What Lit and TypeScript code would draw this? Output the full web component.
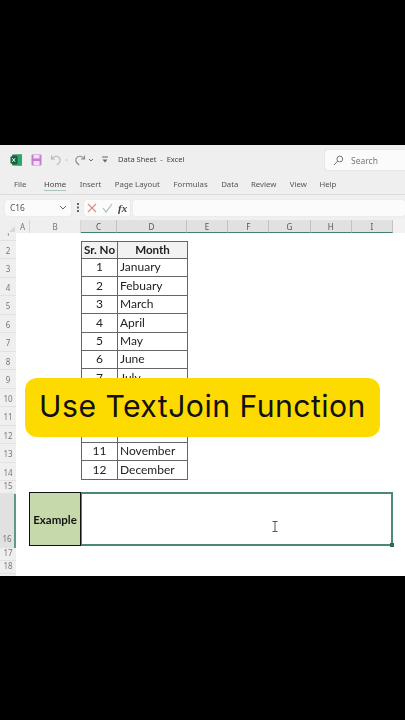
import { LitElement, html, css } from "lit";
import { customElement } from "lit/decorators.js";

const months = ["January","Febuary","March","April","May","June","July","August","September","October","November","December"];
const rowHeads: [string, number][] = [["1",8],["2",18],["3",18.5],["4",18.5],["5",18.5],["6",18.5],["7",18.5],["8",18.5],["9",18.5],["10",18.5],["11",18.5],["12",18.5],["13",18.5],["14",18.5],["15",13],["16",54],["17",13],["18",13],["19",4]];
const cols: [string, number][] = [["A",14],["B",51],["C",36],["D",70],["E",41.200],["F",41.200],["G",41.200],["H",41.200],["I",41.200]];
const tabs: [string, number][] = [["File",0],["Home",17.500],["Insert",13.500],["Page Layout",13.500],["Formulas",13.500],["Data",13.500],["Review",12.500],["View",13.500],["Help",12.500]];

@customElement("app-root")
export class AppRoot extends LitElement {
  static styles = css`
    :host { display:block; width:405px; height:720px; background:#000; padding-top:145px; box-sizing:border-box; overflow:hidden; font-family:"Noto Sans","Open Sans",sans-serif; }
    .app { position:relative; height:431px; background:#fff; display:flex; flex-direction:column; overflow:hidden; color:#444; }
    .soft { filter:blur(.3px); display:flex; flex-direction:column; height:100%; }
    .title { height:30px; background:#efefef; display:flex; align-items:center; padding-left:10px; flex:none; }
    .title svg { display:block; flex:none; }
    .doc { font-size:7.500px; margin-left:9px; margin-bottom:2px; color:#444; white-space:pre; }
    .search { margin-left:auto; width:80px; height:20px; background:#fbfbfb; border-radius:3px 0 0 3px; display:flex; align-items:center; padding-left:8px; gap:7px; font-size:8.500px; color:#777; box-shadow:0 0 1px #bbb; box-sizing:border-box; }
    .tabs { height:20px; background:#efefef; display:flex; align-items:center; font-size:7.800px; color:#555; border-bottom:1px solid #dcdcdc; flex:none; padding:0 0 2px 14px; box-sizing:border-box; }
    .tabs span { white-space:nowrap; }
    .home { position:relative; color:#444; }
    .home::after { content:""; position:absolute; left:0; right:0; bottom:-2px; height:1px; background:#a9c5b7; }
    .fbar { height:25px; background:#f0f0f0; display:flex; align-items:center; flex:none; padding-left:5px; box-sizing:border-box; }
    .box { height:16px; background:#fbfbfb; border-radius:2px; box-shadow:0 0 1px #ccc; display:flex; align-items:center; box-sizing:border-box; }
    .name { width:66px; padding:0 4px 0 5px; font-size:8.400px; color:#555; justify-content:space-between; }
    .dots { width:13px; display:flex; justify-content:center; }
    .fx { width:46px; padding-left:3px; gap:5px; }
    .fxt { font:italic bold 11px "Liberation Serif",serif; color:#444; }
    .input { flex:1; margin-left:3px; }
    .colh { height:13px; display:flex; flex:none; background:#efefef; font-size:8px; color:#777; }
    .corner { width:16px; flex:none; position:relative; }
    .corner::after { content:""; position:absolute; right:1px; bottom:1px; border-style:solid; border-width:0 0 6px 6px; border-color:transparent transparent #d8d8d8 transparent; }
    .col { display:flex; align-items:center; justify-content:center; box-sizing:border-box; border-right:1px solid #d6d6d6; flex:none; }
    .col.sel { background:#e1e1e1; border-bottom:1.500px solid #3f8265; color:#555; border-right-color:#c3c3c3; }
    .colrest { flex:1; background:#f2f2f2; }
    .sheet { flex:1; display:flex; min-height:0; }
    .rows { width:16px; flex:none; background:#efefef; font-size:8px; color:#777; box-sizing:border-box; }
    .rh { display:flex; align-items:flex-end; justify-content:center; box-sizing:border-box; border-bottom:1px solid #e2e2e2; padding-bottom:2.500px; line-height:10px; overflow:hidden; }
    .rh.sel { background:#e1e1e1; border-right:2px solid #5f9a84; border-bottom:0; padding-bottom:4px; }
    .main { flex:1; padding-top:8px; min-width:0; }
    table { border-collapse:collapse; margin-left:65px; width:106px; table-layout:fixed; color:#222; font-family:Lato,"Noto Sans",sans-serif; font-size:12px; }
    td { border:1px solid #666; padding:0 0 1.500px; height:18.400px; line-height:13px; box-sizing:border-box; }
    th { border:1px solid #666; padding:0 0 2px; box-sizing:border-box; background:#f2f2f2; font-weight:700; text-align:center; color:#222; font-size:11.600px; height:17px; line-height:13px; }
    td:first-child { text-align:center; }
    td:last-child { padding-left:2px; }
    .c1 { width:36px; } .c2 { width:70px; }
    .ex { display:flex; margin:12.500px 0 0 13px; height:54px; }
    .exl { width:52px; box-sizing:border-box; background:#c5d9ab; border:1px solid #111; display:flex; align-items:center; justify-content:center; font-family:Lato,"Noto Sans",sans-serif; font-size:11.500px; font-weight:700; color:#141414; }
    .exr { width:312px; box-sizing:border-box; border:2px solid #4a8a70; border-left-width:1px; position:relative; background:#fff; }
    .handle { position:absolute; right:-3px; bottom:-3px; width:4px; height:4px; background:#2c6e50; }
    .cursor { position:absolute; left:190px; top:27px; }
    .banner { position:absolute; left:25px; top:233px; width:355px; height:59px; padding-bottom:3px; box-sizing:border-box; background:#fedb00; border-radius:12px; display:flex; align-items:center; justify-content:center; font-family:Inter,"Noto Sans",sans-serif; font-size:30.200px; letter-spacing:.45px; font-weight:400; color:#111; white-space:nowrap; }
  `;

  render() {
    return html`<div class="app"><div class="soft">
      <div class="title">
        <svg width="12" height="12" viewBox="0 0 12 12"><rect x="2" y="0.500" width="10" height="11" rx="1" fill="#1e7a4c"/><rect x="7" y="0.500" width="5" height="11" fill="#2fa56d"/><rect x="0.500" y="2.500" width="7" height="7" fill="#0f5f39"/><path d="M2.200 4.200l3 3.600M5.200 4.200l-3 3.600" stroke="#fff" stroke-width="1"/></svg>
        <svg style="margin-left:9px" width="11" height="12" viewBox="0 0 11 12"><rect x="0.500" y="0.500" width="10" height="11" rx="1" fill="#c47ed0"/><rect x="2.500" y="1" width="6" height="3.500" fill="#f2e2f4"/><rect x="2.500" y="7" width="6" height="4" fill="#f2e2f4"/></svg>
        <svg style="margin-left:8px" width="20" height="12" viewBox="0 0 20 12" fill="none"><path d="M1.500 1.500v3.500h3.500M1.800 5c1.500-3 6.500-4 8-.5 1 2.500-.5 5-3 6.500" stroke="#b9b3bd" stroke-width="1.100"/><path d="M15 6h3" stroke="#ccc" stroke-width="1"/></svg>
        <svg style="margin-left:4px" width="22" height="12" viewBox="0 0 22 12" fill="none"><path d="M10.500 1.500v3.500H7M10.200 5C8.700 2 3.700 1 2.200 4.500c-1 2.500.5 5 3 6.500" stroke="#8a8a8a" stroke-width="1.100"/><path d="M15 5l2 2 2-2" stroke="#666" stroke-width="1"/></svg>
        <svg style="margin-left:5px" width="8" height="10" viewBox="0 0 8 10"><path d="M1 2h6" stroke="#666" stroke-width="1"/><path d="M1.500 4.500h5L4 7.500z" fill="#666"/></svg>
        <span class="doc">Data Sheet  -  Excel</span>
        <div class="search">
          <svg width="11" height="11" viewBox="0 0 11 11" fill="none" stroke="#777"><circle cx="6.800" cy="4" r="2.900"/><path d="M4.700 6L1 10"/></svg>
          <span>Search</span>
        </div>
      </div>
      <div class="tabs">${tabs.map(([t,g]) => html`<span class=${t==="Home"?"home":""} style="margin-left:${g}px">${t}</span>`)}</div>
      <div class="fbar">
        <div class="box name"><span>C16</span><svg width="8" height="5" viewBox="0 0 8 5" fill="none" stroke="#666"><path d="M1 1l3 3 3-3"/></svg></div>
        <div class="dots"><svg width="2" height="9" viewBox="0 0 2 9" fill="#666"><rect width="2" height="2"/><rect y="3.500" width="2" height="2"/><rect y="7" width="2" height="2"/></svg></div>
        <div class="box fx">
          <svg width="10" height="10" viewBox="0 0 10 10" fill="none" stroke="#d98a8a" stroke-width="1.100"><path d="M1 1l8 8M9 1l-8 8"/></svg>
          <svg width="11" height="10" viewBox="0 0 11 10" fill="none" stroke="#a3bfb0" stroke-width="1.100"><path d="M1 5l3 4 6-8"/></svg>
          <span class="fxt">fx</span>
        </div>
        <div class="box input"></div>
      </div>
      <div class="colh">
        <div class="corner"></div>
        ${cols.map(([c,w],i) => html`<div class="col ${i>=2?"sel":""}" style="width:${w}px">${c}</div>`)}
        <div class="colrest"></div>
      </div>
      <div class="sheet">
        <div class="rows">${rowHeads.map(([r,h]) => html`<div class="rh ${r==="16"?"sel":""}" style="height:${h}px">${r}</div>`)}</div>
        <div class="main">
          <table>
            <colgroup><col class="c1"/><col class="c2"/></colgroup>
            <tr><th>Sr. No</th><th>Month</th></tr>
            ${months.map((m,i) => html`<tr><td>${i+1}</td><td>${m}</td></tr>`)}
          </table>
          <div class="ex">
            <div class="exl">Example</div>
            <div class="exr">
              <svg class="cursor" width="6" height="11" viewBox="0 0 6 11" fill="none" stroke="#555" stroke-width="1"><path d="M0.500 0.500h5M3 0.500v10M0.500 10.500h5"/></svg>
              <div class="handle"></div>
            </div>
          </div>
        </div>
      </div>
    </div>
    <div class="banner">Use TextJoin Function</div>
    </div>`;
  }
}
